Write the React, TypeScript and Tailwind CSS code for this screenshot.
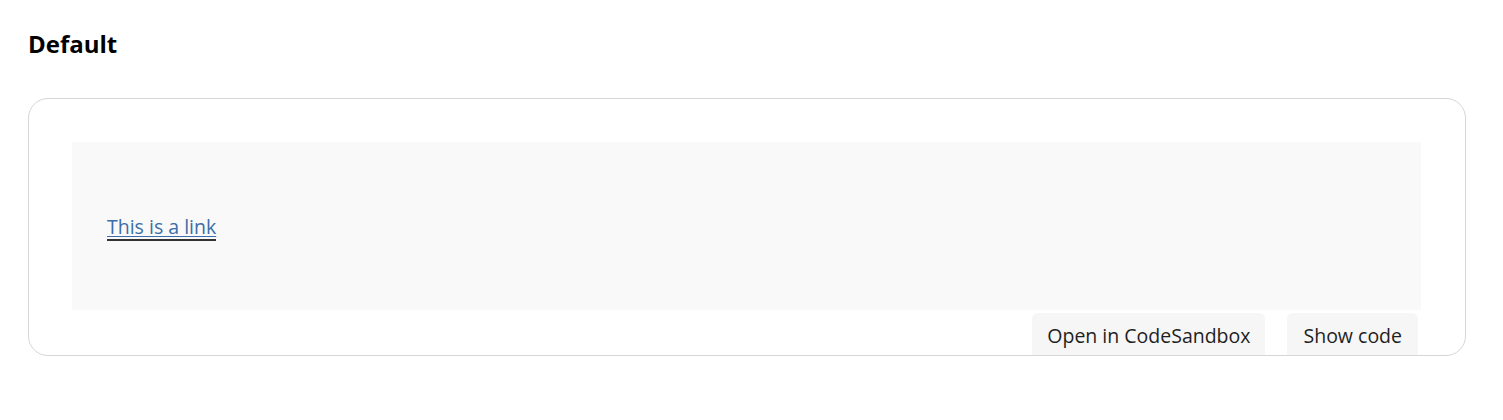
export default function App() {
  return (
    <div
      className="pl-[28px] pr-[37px] pt-[30px] bg-white min-h-[420px]"
      style={{ fontFamily: '"Open Sans", "Noto Sans", sans-serif' }}
    >
      <h2 className="text-[24px] font-bold text-black leading-[28px]">Default</h2>

      {/* Preview card */}
      <div className="mt-[40px] h-[258px] border border-[#d6d6d6] rounded-[20px] overflow-hidden pl-[43px] pr-[44px] pt-[43px]">
        <div className="h-[168px] bg-[#f9f9f9] flex items-center pl-[35px]">
          <a
            href="#"
            className="mt-[4px] text-[19.5px] leading-[24px] text-[#3b6ea8] underline underline-offset-[2px] border-b-2 border-[#333]"
          >
            This is a link
          </a>
        </div>
        <div className="flex justify-end gap-[22px] mt-[3px] pr-[3px]">
          <button className="h-[48px] px-[15px] pb-[2px] rounded-t-[6px] bg-[#f6f6f6] text-[19.5px] text-[#1f1f1f]">
            Open in CodeSandbox
          </button>
          <button className="h-[48px] px-[16px] pb-[2px] rounded-t-[6px] bg-[#f6f6f6] text-[19.5px] text-[#1f1f1f]">
            Show code
          </button>
        </div>
      </div>
    </div>
  );
}
